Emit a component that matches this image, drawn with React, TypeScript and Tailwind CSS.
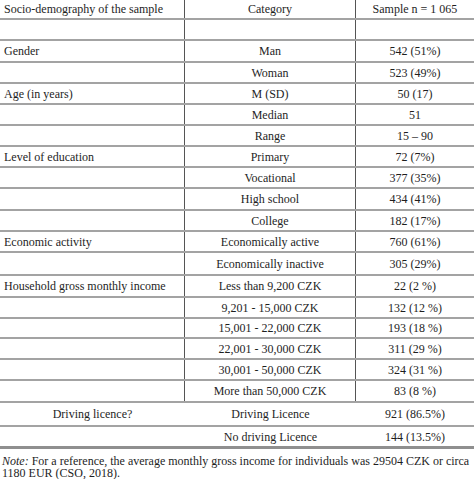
import React from "react";

type Row = { a: string; b: string; c: string; h: string };

const rows: Row[] = [
  { a: "", b: "", c: "", h: "h-[21px]" },
  { a: "Gender", b: "Man", c: "542 (51%)", h: "h-[22px]" },
  { a: "", b: "Woman", c: "523 (49%)", h: "h-[21px]" },
  { a: "Age (in years)", b: "M (SD)", c: "50 (17)", h: "h-[21px]" },
  { a: "", b: "Median", c: "51", h: "h-[21px]" },
  { a: "", b: "Range", c: "15 – 90", h: "h-[21px]" },
  { a: "Level of education", b: "Primary", c: "72 (7%)", h: "h-[21px]" },
  { a: "", b: "Vocational", c: "377 (35%)", h: "h-[21px]" },
  { a: "", b: "High school", c: "434 (41%)", h: "h-[22px]" },
  { a: "", b: "College", c: "182 (17%)", h: "h-[21px]" },
  { a: "Economic activity", b: "Economically active", c: "760 (61%)", h: "h-[21px]" },
  { a: "", b: "Economically inactive", c: "305 (29%)", h: "h-[23px]" },
  { a: "Household gross monthly income", b: "Less than 9,200 CZK", c: "22 (2 %)", h: "h-[22px]" },
  { a: "", b: "9,201 - 15,000 CZK", c: "132 (12 %)", h: "h-[21px]" },
  { a: "", b: "15,001 - 22,000 CZK", c: "193 (18 %)", h: "h-[20px]" },
  { a: "", b: "22,001 - 30,000 CZK", c: "311 (29 %)", h: "h-[21px]" },
  { a: "", b: "30,001 - 50,000 CZK", c: "324 (31 %)", h: "h-[21px]" },
  { a: "", b: "More than 50,000 CZK", c: "83 (8 %)", h: "h-[22px]" },
];

export default function App() {
  return (
    <div
      className="w-[474px] h-[479px] bg-white text-[#1e1e1e] overflow-hidden text-[12px] leading-none"
      style={{ fontFamily: '"Liberation Serif", "Times New Roman", serif' }}
    >
      <div className="flex h-[20px] border-b-2 border-[#a3a3a3]">
        <div className="w-[185px] border-r border-[#555] pl-[4px] flex items-center">
          Socio-demography of the sample
        </div>
        <div className="w-[171px] border-r border-[#555] flex items-center justify-center">
          Category
        </div>
        <div className="flex-1 flex items-center justify-center">Sample n = 1 065</div>
      </div>
      {rows.map((r, i) => (
        <div key={i} className={`flex border-b-2 border-[#a3a3a3] ${r.h}`}>
          <div className="w-[185px] border-r border-[#555] pl-[4px] flex items-center">
            {r.a}
          </div>
          <div className="w-[171px] border-r border-[#555] flex items-center justify-center">
            {r.b}
          </div>
          <div className="flex-1 flex items-center justify-center">{r.c}</div>
        </div>
      ))}
      <div className="flex h-[24px] border-b-2 border-[#a3a3a3]">
        <div className="w-[185px] flex items-center justify-center">Driving licence?</div>
        <div className="w-[171px] flex items-center justify-center">Driving Licence</div>
        <div className="flex-1 flex items-center justify-center">921 (86.5%)</div>
      </div>
      <div className="flex h-[22px] border-b-[3px] border-[#8f8f8f]">
        <div className="w-[185px]"></div>
        <div className="w-[171px] flex items-center justify-center">No driving Licence</div>
        <div className="flex-1 flex items-center justify-center">144 (13.5%)</div>
      </div>
      <p className="pl-[2px] pt-[6px] leading-[12px]">
        <span className="italic">Note:</span> For a reference, the average monthly gross income for individuals was 29504 CZK or circa 1180 EUR (CSO, 2018).
      </p>
    </div>
  );
}
